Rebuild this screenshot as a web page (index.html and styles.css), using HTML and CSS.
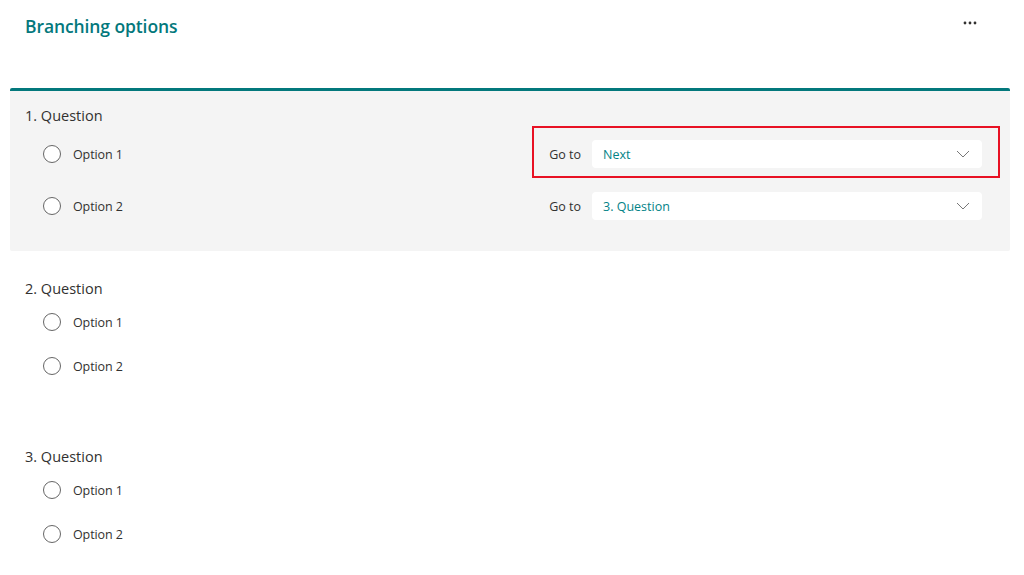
FILE: index.html
```html
<!DOCTYPE html>
<html lang="en">

<head>
    <meta charset="UTF-8">
    <meta name="viewport" content="width=device-width, initial-scale=1.0">
    <title>Branching options</title>
    <link rel="stylesheet" href="styles.css">
</head>

<body>
    <div class="header">
        <h1 class="title">Branching options</h1>
        <button class="more-btn" aria-label="More options">
            <svg width="14" height="4" viewBox="0 0 14 4">
                <circle cx="2" cy="2" r="1.4" fill="#323130" />
                <circle cx="7" cy="2" r="1.4" fill="#323130" />
                <circle cx="12" cy="2" r="1.4" fill="#323130" />
            </svg>
        </button>
    </div>

    <div class="questions">
        <div class="question branching">
            <div class="question-title">1. Question</div>
            <div class="options">
                <div class="option-row">
                    <span class="radio"></span>
                    <span class="option-label">Option 1</span>
                    <div class="goto">
                        <span class="goto-label">Go to</span>
                        <div class="select">
                            <span>Next</span>
                            <svg class="chevron" width="14" height="8" viewBox="0 0 14 8">
                                <path d="M1 1 L7 7 L13 1" fill="none" stroke="#777" stroke-width="1" />
                            </svg>
                        </div>
                    </div>
                </div>
                <div class="option-row">
                    <span class="radio"></span>
                    <span class="option-label">Option 2</span>
                    <div class="goto">
                        <span class="goto-label">Go to</span>
                        <div class="select">
                            <span>3. Question</span>
                            <svg class="chevron" width="14" height="8" viewBox="0 0 14 8">
                                <path d="M1 1 L7 7 L13 1" fill="none" stroke="#777" stroke-width="1" />
                            </svg>
                        </div>
                    </div>
                </div>
            </div>
            <!-- annotation box round the first rule -->
            <div class="highlight"></div>
        </div>

        <div class="question">
            <div class="question-title">2. Question</div>
            <div class="options">
                <div class="option-row">
                    <span class="radio"></span>
                    <span class="option-label">Option 1</span>
                </div>
                <div class="option-row">
                    <span class="radio"></span>
                    <span class="option-label">Option 2</span>
                </div>
            </div>
        </div>

        <div class="question">
            <div class="question-title">3. Question</div>
            <div class="options">
                <div class="option-row">
                    <span class="radio"></span>
                    <span class="option-label">Option 1</span>
                </div>
                <div class="option-row">
                    <span class="radio"></span>
                    <span class="option-label">Option 2</span>
                </div>
            </div>
        </div>
    </div>
</body>

</html>
```

FILE: styles.css
```css
body {
    font-family: "Open Sans", "Noto Sans", sans-serif;
    color: #323130;
    margin: 0;
    background-color: #fff;
}

.header {
    display: flex;
    align-items: center;
    justify-content: space-between;
    padding: 14px 44px 0 25px;
    height: 24px;
}

.title {
    font-size: 17.5px;
    font-weight: 600;
    line-height: 24px;
    letter-spacing: -0.1px;
    color: #03787c;
    margin: 0;
}

.more-btn {
    background: none;
    border: none;
    padding: 0;
    width: 20px;
    height: 20px;
    display: flex;
    align-items: center;
    justify-content: center;
    margin-top: -6px;
    cursor: pointer;
}

.questions {
    margin: 50px 14px 0 10px;
}

.question {
    position: relative;
    padding: 16px 28px 36px 15px;
}

.question + .question {
    margin-top: 12px;
}

.question + .question + .question {
    margin-top: 15px;
}

.question.branching {
    background-color: #f4f4f4;
    border-top: 3px solid #03787c;
    border-radius: 2px;
    padding-top: 15px;
    padding-bottom: 31px;
}

.question-title {
    font-size: 14.5px;
    line-height: 20px;
    margin-bottom: 9px;
}

.branching .question-title {
    margin-bottom: 14px;
}

.options {
    display: flex;
    flex-direction: column;
    gap: 16px;
}

.branching .options {
    gap: 24px;
}

.option-row {
    display: flex;
    align-items: center;
    height: 28px;
    padding-left: 18px;
}

.radio {
    width: 16px;
    height: 16px;
    border: 1px solid #666;
    border-radius: 50%;
    background-color: #fff;
    margin-right: 12px;
}

.option-label {
    font-size: 12.5px;
    letter-spacing: -0.1px;
}

.goto {
    margin-left: auto;
    display: flex;
    align-items: center;
}

.goto-label {
    font-size: 12.5px;
    margin-right: 11px;
}

.select {
    width: 390px;
    height: 28px;
    box-sizing: border-box;
    background-color: #fff;
    border-radius: 4px;
    display: flex;
    align-items: center;
    justify-content: space-between;
    padding: 0 12px 0 11px;
    font-size: 12.5px;
    color: #038387;
}

.highlight {
    position: absolute;
    left: 522px;
    top: 35px;
    width: 464px;
    height: 48px;
    border: 2px solid #e81123;
}
```
